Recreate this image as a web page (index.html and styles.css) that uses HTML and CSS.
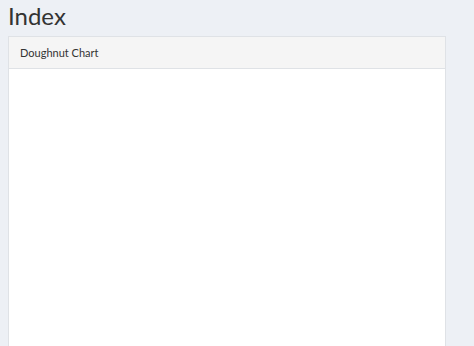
FILE: index.html
```html
<!DOCTYPE html>
<html lang="en">
<head>
    <meta charset="UTF-8">
    <meta name="viewport" content="width=device-width, initial-scale=1.0">
    <title>Index</title>
    <link rel="stylesheet" href="styles.css">
</head>
<body>
    <div class="page">
        <h1 class="page-title">Index</h1>
        <div class="panel">
            <div class="panel-heading">Doughnut Chart</div>
            <div class="panel-body">
                <canvas id="doughnutChart"></canvas>
            </div>
        </div>
    </div>
</body>
</html>
```

FILE: styles.css
```css
html, body {
    margin: 0;
    padding: 0;
    background-color: #edf0f5;
    font-family: Lato, "Open Sans", sans-serif;
    color: #333;
}
.page {
    padding: 0 28px 0 8px;
    height: 346px;
    overflow: hidden;
}
.page-title {
    margin: 0;
    height: 36px;
    font-size: 24px;
    font-weight: normal;
    line-height: 32px;
    color: #333;
}
.panel {
    background: white;
    border: 1px solid #dfe2e6;
    height: 400px;
}
.panel-heading {
    background-color: #f5f5f5;
    border-bottom: 1px solid #dfe2e6;
    padding: 0 11px;
    height: 31px;
    line-height: 31px;
    font-size: 11px;
}
.panel-body canvas {
    display: block;
    width: 100%;
    height: 0;
}
```
